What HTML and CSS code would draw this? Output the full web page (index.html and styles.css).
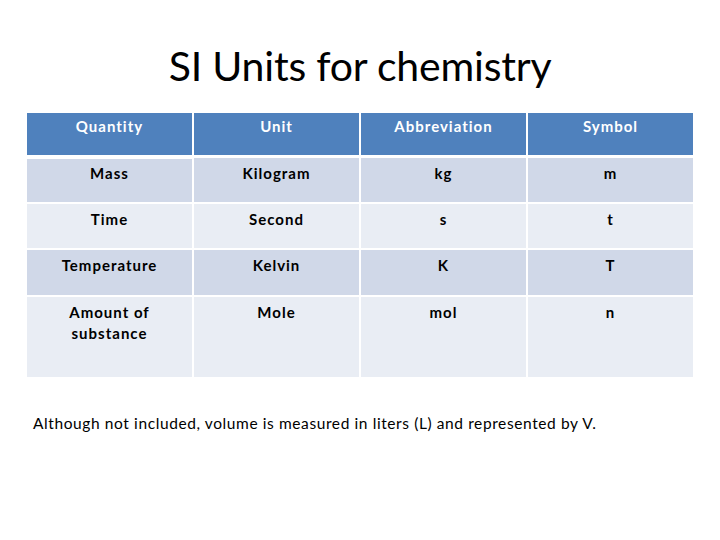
FILE: index.html
```html
<!DOCTYPE html>
<html>
<head>
<meta charset="utf-8">
<link rel="stylesheet" href="styles.css">
</head>
<body>
<div class="slide">
  <h1 class="title">SI Units for chemistry</h1>
  <div class="table">
    <div class="cell head">Quantity</div>
    <div class="cell head">Unit</div>
    <div class="cell head">Abbreviation</div>
    <div class="cell head">Symbol</div>
    <div class="cell odd">Mass</div>
    <div class="cell odd">Kilogram</div>
    <div class="cell odd">kg</div>
    <div class="cell odd">m</div>
    <div class="cell even">Time</div>
    <div class="cell even">Second</div>
    <div class="cell even">s</div>
    <div class="cell even">t</div>
    <div class="cell odd">Temperature</div>
    <div class="cell odd">Kelvin</div>
    <div class="cell odd">K</div>
    <div class="cell odd">T</div>
    <div class="cell even">Amount of<br>substance</div>
    <div class="cell even">Mole</div>
    <div class="cell even">mol</div>
    <div class="cell even">n</div>
  </div>
  <p class="note">Although not included, volume is measured in liters (L) and represented by V.</p>
</div>
</body>
</html>
```
FILE: styles.css
```css
html, body {
  margin: 0;
  padding: 0;
  background: #ffffff;
}
.slide {
  width: 720px;
  height: 540px;
  box-sizing: border-box;
  padding: 39px 27px 0 27px;
  font-family: Lato, "Open Sans", sans-serif;
  color: #000;
}
.title {
  margin: 0;
  height: 74px;
  font-size: 41px;
  font-weight: 400;
  line-height: 54px;
  text-align: center;
  letter-spacing: -0.2px;
}
.table {
  display: grid;
  grid-template-columns: repeat(4, 165px);
  grid-template-rows: 43px 44px 44px 45px 80px;
  column-gap: 2px;
  row-gap: 2px;
  width: 666px;
}
.cell {
  box-sizing: border-box;
  text-align: center;
  font-size: 15px;
  font-weight: 700;
  line-height: 21px;
  letter-spacing: 1px;
  padding-top: 4px;
}
.head {
  background: #4f81bd;
  color: #ffffff;
  margin-bottom: 1px;
  padding-top: 3px;
}
.odd {
  background: #d0d8e8;
  margin-top: 1px;
  padding-top: 4px;
}
.odd ~ .odd {
  margin-top: 0;
  padding-top: 5px;
}
.even {
  background: #e9edf4;
  padding-top: 5px;
}
.note {
  margin: 36px 0 0 6px;
  font-size: 15.5px;
  line-height: 20px;
  font-weight: 400;
  letter-spacing: 0.6px;
}
```
